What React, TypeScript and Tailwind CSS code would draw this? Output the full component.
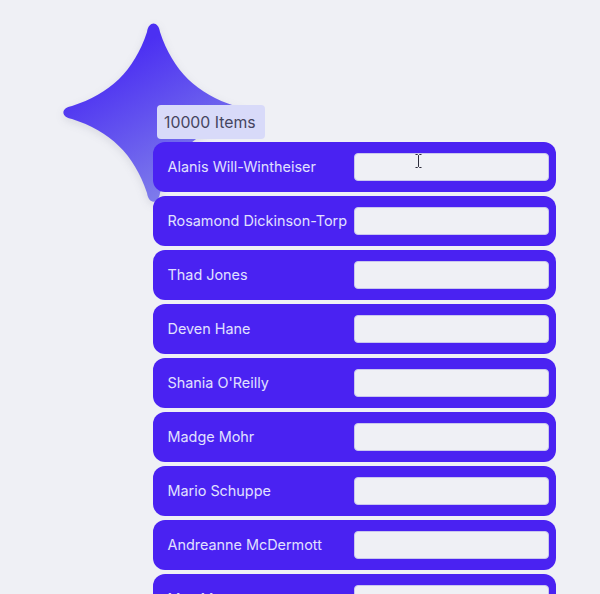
const names = [
  "Alanis Will-Wintheiser",
  "Rosamond Dickinson-Torp",
  "Thad Jones",
  "Deven Hane",
  "Shania O'Reilly",
  "Madge Mohr",
  "Mario Schuppe",
  "Andreanne McDermott",
  "Max Mayer",
];

function Row({ name }: { name: string }) {
  return (
    <div className="flex h-[50px] items-center justify-between rounded-[12px] bg-[#4a22f2] pr-[7px] pl-[14.5px]">
      <span className="text-[14.4px] whitespace-nowrap text-[#e0e0ff]">
        {name}
      </span>
      <input className="h-[28px] w-[195px] rounded-[4px] border border-[#c9c6ee] bg-[#eff0f5]" />
    </div>
  );
}

export default function App() {
  return (
    <main className="relative h-[594px] w-[600px] overflow-hidden bg-[#eff0f5] font-['Inter',sans-serif]">

      <svg
        className="absolute top-[23px] left-[64px] overflow-visible drop-shadow-[0_3px_4px_rgba(60,60,90,0.12)]"
        width="180"
        height="180"
        viewBox="0 0 180 180"
      >
        <defs>
          <linearGradient
            id="star"
            x1="0.3"
            y1="0.2"
            x2="0.75"
            y2="0.95"
          >
            <stop offset="0" stopColor="#4c30f2" />
            <stop offset="1" stopColor="#8384ea" />
          </linearGradient>
        </defs>
        <path
          fill="url(#star)"
          d="M83 9 C84.5 -2.5 94.5 -2.5 96 9 C109 48 133 71 171 83 C182.5 84.5 182.5 94.5 171 96 C133 108 109 131 96 170 C94.5 181.5 84.5 181.5 83 170 C70 131 46 108 8 96 C-3.5 94.5 -3.5 84.5 8 83 C46 71 70 48 83 9 Z"
        />
      </svg>

      <div className="relative ml-[153px] w-[403px] pt-[105px]">

        <div className="mb-[3px] ml-[4px] flex h-[34px] w-[108px] items-center rounded-[4px] bg-[#d8daf9] pt-[1px] pl-[7px] text-[15.8px] text-[#45455f]">
          10000 Items
        </div>

        <div className="flex flex-col gap-[4px]">
          {names.map((name) => (
            <Row key={name} name={name} />
          ))}
        </div>

      </div>

      <svg
        className="absolute top-[154px] left-[415px]"
        width="7"
        height="14"
        viewBox="0 0 7 14"
        fill="none"
        stroke="#2c2c3a"
        strokeWidth="1"
      >
        <path d="M0.5 0.5H2.5L3.5 1.5L4.5 0.5H6.5M3.5 1.5V12.5M0.5 13.5H2.5L3.5 12.5L4.5 13.5H6.5" />
      </svg>

    </main>
  );
}
